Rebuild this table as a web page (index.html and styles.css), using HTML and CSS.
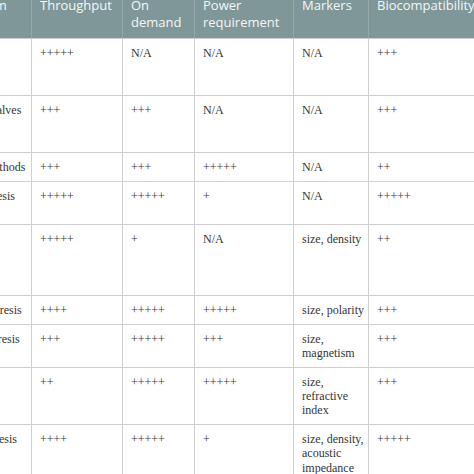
FILE: index.html
```html
<!DOCTYPE html>
<html>
<head>
<meta charset="utf-8">
<link rel="stylesheet" href="styles.css">
</head>
<body>
<div class="frame">
<table class="grid">
<colgroup>
<col class="c0"><col class="c1"><col class="c2"><col class="c3"><col class="c4"><col class="c5">
</colgroup>
<thead>
<tr>
<th>Mechanism</th>
<th>Throughput</th>
<th>On<br>demand</th>
<th>Power<br>requirement</th>
<th>Markers</th>
<th>Biocompatibility</th>
</tr>
</thead>
<tbody>
<tr><td>Manual<br>micropipette<br>picking</td><td>+++++</td><td>N/A</td><td>N/A</td><td>N/A</td><td>+++</td></tr>
<tr><td>Pneumatic valves<br>and pumps<br>(on-chip)</td><td>+++</td><td>+++</td><td>N/A</td><td>N/A</td><td>+++</td></tr>
<tr><td>Filtration methods</td><td>+++</td><td>+++</td><td>+++++</td><td>N/A</td><td>++</td></tr>
<tr><td>Thermophoresis<br>(heating)</td><td>+++++</td><td>+++++</td><td>+</td><td>N/A</td><td>+++++</td></tr>
<tr><td>Inertial<br>focusing<br>and spiral<br>channels</td><td>+++++</td><td>+</td><td>N/A</td><td>size, density</td><td>++</td></tr>
<tr><td>Dielectrophoresis</td><td>++++</td><td>+++++</td><td>+++++</td><td>size, polarity</td><td>+++</td></tr>
<tr><td>Magnetophoresis<br>(beads)</td><td>+++</td><td>+++++</td><td>+++</td><td>size,<br>magnetism</td><td>+++</td></tr>
<tr><td>Optical<br>tweezers<br>sorting</td><td>++</td><td>+++++</td><td>+++++</td><td>size,<br>refractive<br>index</td><td>+++</td></tr>
<tr><td>Acoustophoresis<br>(standing<br>waves)</td><td>++++</td><td>+++++</td><td>+</td><td>size, density,<br>acoustic<br>impedance</td><td>+++++</td></tr>
</tbody>
</table>
</div>
</body>
</html>
```

FILE: styles.css
```css
html, body {
  margin: 0;
  padding: 0;
  background: #ffffff;
}
.frame {
  width: 474px;
  height: 474px;
  overflow: hidden;
}
.grid {
  border-collapse: collapse;
  table-layout: fixed;
  width: 572px;
  margin-left: -72px;
  margin-top: -8px;
}
.c0 { width: 103px; }
.c1 { width: 91px; }
.c2 { width: 72px; }
.c3 { width: 99px; }
.c4 { width: 75px; }
.c5 { width: 132px; }
.grid th {
  background: #7f9799;
  color: #f4f7f7;
  font-family: "Open Sans", "Noto Sans", sans-serif;
  font-weight: 400;
  font-size: 13px;
  line-height: 17px;
  text-align: left;
  vertical-align: top;
  padding: 4.5px 8px 7.5px;
  border-left: 1px solid #94a9ab;
  border-right: 1px solid #94a9ab;
  border-bottom: 1px solid #c9cfcf;
  white-space: nowrap;
}
.grid td {
  font-family: "Liberation Serif", "Times New Roman", serif;
  font-size: 12px;
  line-height: 14.4px;
  color: #353535;
  text-align: left;
  vertical-align: top;
  padding: 7px 8px 6px;
  border: 1px solid #d0d0d0;
  white-space: nowrap;
}
```
